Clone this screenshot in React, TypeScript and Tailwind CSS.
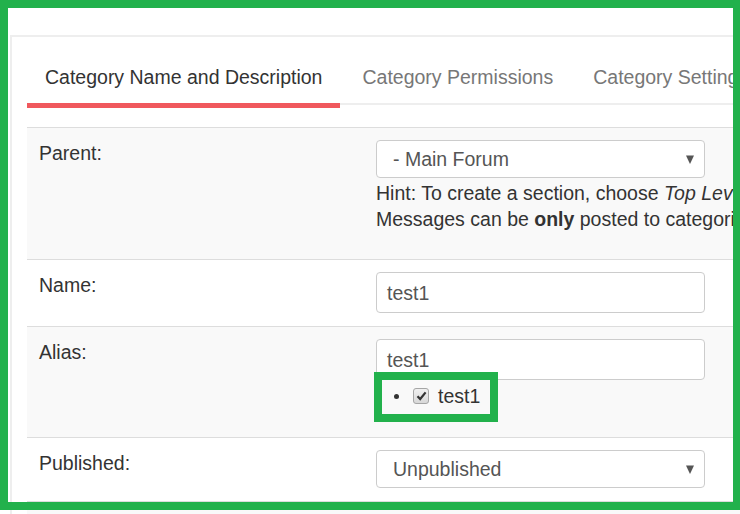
const FONT = "font-['Liberation_Sans',Arial,sans-serif]";

const tabs = [
  { label: "Category Name and Description", active: true },
  { label: "Category Permissions", active: false },
  { label: "Category Settings", active: false },
];

function Caret() {
  return (
    <svg width="8" height="9" viewBox="0 0 8 9" className="shrink-0">
      <polygon points="0,0.5 8,0.5 4,9" fill="#555" />
    </svg>
  );
}

function Select({ value }: { value: string }) {
  return (
    <div className="flex h-[38px] w-[329px] items-center justify-between rounded-[4px] border border-[#ccc] bg-white pl-[16px] pr-[10px] text-[#555]">
      <span>{value}</span>
      <Caret />
    </div>
  );
}

function TextInput({ value }: { value: string }) {
  return (
    <div className="flex h-[41px] w-[329px] items-center rounded-[4px] border border-[#ccc] bg-white pl-[10px] text-[#555]">
      {value}
    </div>
  );
}

function CheckBox() {
  return (
    <span className="flex h-[16px] w-[16px] items-center justify-center rounded-[3px] border border-[#a6a6a6] bg-gradient-to-b from-[#f0f0f0] to-[#d8d8d8]">
      <svg width="11" height="10" viewBox="0 0 11 10">
        <path d="M1.5 5.2 L4.2 8 L9.6 1.4" fill="none" stroke="#333" strokeWidth="2.2" />
      </svg>
    </span>
  );
}

function Row({
  label,
  striped,
  children,
}: {
  label: string;
  striped: boolean;
  children?: React.ReactNode;
}) {
  return (
    <tr className={`border-t border-[#ddd] align-top ${striped ? "bg-[#f9f9f9]" : "bg-white"}`}>
      <td className="w-[337px] px-[12px] pt-[12px] pb-[13px]">{label}</td>
      <td className="px-[12px] pt-[12px] pb-[13px]">{children}</td>
    </tr>
  );
}

export default function App() {
  return (
    <div className={`relative h-[514px] w-[740px] overflow-hidden bg-white text-[19.5px] leading-[26px] text-[#333] ${FONT}`}>
      <div className="pl-[10px] pt-[35px]">
        <div className="border-l-2 border-t-2 border-[#eee] pl-[15px]">
          {/* tabs */}
          <div className="flex w-[1000px] border-b-2 border-[#eee]">
            {tabs.map((t, i) => (
              <div
                key={t.label}
                className={`-mb-[5px] whitespace-nowrap border-b-[5px] px-[18px] pb-[13px] pt-[27px] ${
                  i > 0 ? "ml-[4px]" : ""
                } ${t.active ? "border-[#f0585d] text-[#333]" : "border-transparent text-[#777]"}`}
              >
                {t.label}
              </div>
            ))}
          </div>

          <table className="mt-[22px] w-[1000px] border-collapse">
            <tbody>
              <Row label="Parent:" striped>
                <Select value="- Main Forum" />
                <p className="mb-[14px] mt-[2px] whitespace-nowrap">
                  Hint: To create a section, choose <em>Top Level Category</em> as a parent.
                  <br />
                  Messages can be <b>only</b> posted to categories, not to sections.
                </p>
              </Row>
              <Row label="Name:" striped={false}>
                <TextInput value="test1" />
              </Row>
              <Row label="Alias:" striped>
                <TextInput value="test1" />
                <div className="mb-[15px] mt-[3px] flex items-center">
                  <span className="ml-[18px] h-[5px] w-[5px] rounded-full bg-[#333]" />
                  <span className="ml-[14px]">
                    <CheckBox />
                  </span>
                  <span className="ml-[9px]">test1</span>
                </div>
              </Row>
              <Row label="Published:" striped={false}>
                <Select value="Unpublished" />
              </Row>
              <Row label="Ordering:" striped />
            </tbody>
          </table>
        </div>
      </div>

      {/* annotation frames */}
      <div className="pointer-events-none absolute left-[374px] top-[372px] h-[50px] w-[124px] border-8 border-[#22b14c]" />
      <div className="pointer-events-none absolute left-0 top-0 h-[510px] w-[740px] border-8 border-r-[7px] border-[#22b14c]" />
    </div>
  );
}
